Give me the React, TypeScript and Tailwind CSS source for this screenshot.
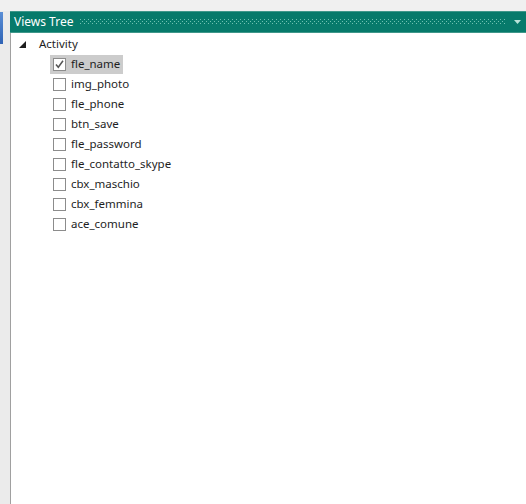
import React from "react";

const items = [
  "fle_name",
  "img_photo",
  "fle_phone",
  "btn_save",
  "fle_password",
  "fle_contatto_skype",
  "cbx_maschio",
  "cbx_femmina",
  "ace_comune",
];

function Checkbox({ checked }: { checked: boolean }) {
  return (
    <div className="w-[13px] h-[13px] border border-[#8c8c8c] bg-white flex items-center justify-center shrink-0">
      {checked && (
        <svg width="11" height="11" viewBox="0 0 11 11">
          <path d="M2 5.5 L4.3 8.3 L9 1.8" fill="none" stroke="#555555" strokeWidth="1.5" />
        </svg>
      )}
    </div>
  );
}

export default function App() {
  return (
    <div
      className="w-[526px] h-[504px] bg-[#f0f0f0] flex flex-col overflow-hidden text-[11.5px] text-[#1e1e1e]"
      style={{ fontFamily: '"Noto Sans", "Segoe UI", sans-serif' }}
    >
      <div className="h-[11px] shrink-0 bg-[#f0f0f0]" />
      <div className="flex flex-1 min-h-0">
        <div className="w-[10px] shrink-0 bg-[#ebebeb] flex flex-col">
          <div className="h-[1px]" />
          <div className="w-[3px] h-[32px] bg-gradient-to-b from-[#5b8fd6] to-[#2f63b5]" />
        </div>
        <div className="flex-1 flex flex-col min-w-0">
          <div className="h-[22px] shrink-0 bg-[#077a6b] border-y border-[#3f978a] flex items-center pl-[4px] pr-[4px]">
            <span className="text-white text-[12px] leading-none whitespace-nowrap">Views Tree</span>
            <svg className="ml-[7px] flex-1 h-[6px]" height="6">
              <defs>
                <pattern id="dots" width="4" height="4" patternUnits="userSpaceOnUse">
                  <rect x="0" y="0" width="1" height="1" fill="#6fc1b1" />
                  <rect x="2" y="2" width="1" height="1" fill="#6fc1b1" />
                </pattern>
              </defs>
              <rect x="0" y="0" width="100%" height="6" fill="url(#dots)" />
            </svg>
            <svg className="ml-[8px] mr-[1px]" width="7" height="4" viewBox="0 0 7 4">
              <polygon points="0,0 7,0 3.5,4" fill="#b9e3da" />
            </svg>
          </div>
          <div className="flex-1 bg-white border-l border-[#a0a0a0] pt-[1px]">
            <div className="h-[20px] flex items-center">
              <svg className="ml-[8px]" width="7" height="7" viewBox="0 0 7 7">
                <polygon points="7,0 7,7 0,7" fill="#1e1e1e" />
              </svg>
              <span className="ml-[13px] leading-none">Activity</span>
            </div>
            {items.map((name, i) => (
              <div key={name} className="h-[20px] flex items-center">
                <div
                  className={
                    "ml-[39px] h-[19px] flex items-center pl-[3px] pr-[3px] gap-[5px] " +
                    (i === 0 ? "bg-[#cccccc]" : "")
                  }
                >
                  <Checkbox checked={i === 0} />
                  <span className="leading-none whitespace-nowrap">{name}</span>
                </div>
              </div>
            ))}
          </div>
        </div>
      </div>
    </div>
  );
}
